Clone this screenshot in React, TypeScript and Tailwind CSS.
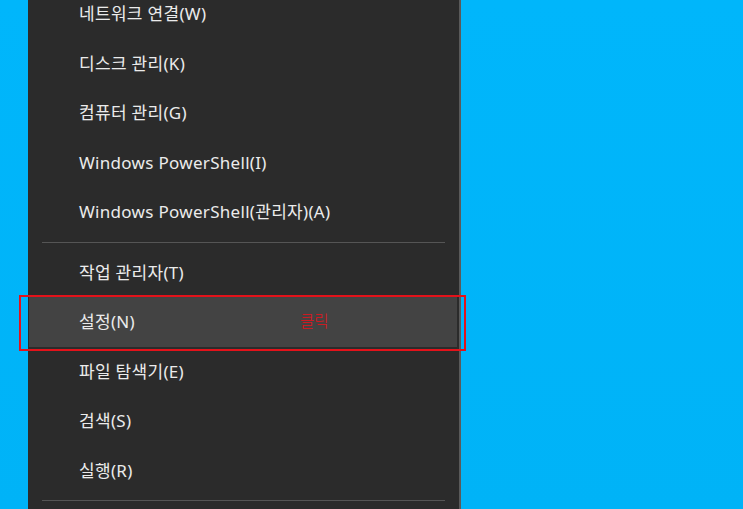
const items: { label: string; key: string }[][] = [
  [
    { label: "네트워크 연결", key: "W" },
    { label: "디스크 관리", key: "K" },
    { label: "컴퓨터 관리", key: "G" },
    { label: "Windows PowerShell", key: "I" },
    { label: "Windows PowerShell(관리자)", key: "A" },
  ],
  [
    { label: "작업 관리자", key: "T" },
    { label: "설정", key: "N" },
    { label: "파일 탐색기", key: "E" },
    { label: "검색", key: "S" },
    { label: "실행", key: "R" },
  ],
];

const MenuRow = ({ label, hotkey, active }: { label: string; hotkey: string; active?: boolean }) => (
  <div
    className={`relative h-[49.5px] mr-[2px] pl-[50px] flex items-center text-[17px] tracking-[0.3px] text-[#ebebeb] ${
      active ? "bg-[#434343]" : ""
    }`}
  >
    {label}({hotkey})
    {active && (
      <>
        <span className="absolute left-[-10px] right-[-9px] top-[-2px] bottom-[-4px] border-2 border-[#e3121a]" />
        <span className="absolute left-[271px] top-[13px] text-[15.5px] tracking-normal font-light text-[#e3121a]">
          클릭
        </span>
      </>
    )}
  </div>
);

const Separator = () => (
  <div className="h-[11px] flex items-center">
    <div className="ml-[13px] w-[403px] h-px bg-[#555555]" />
  </div>
);

export default function App() {
  return (
    <div
      className="w-[743px] h-[509px] overflow-hidden flex bg-gradient-to-b from-[#00b6fb] to-[#00b3f7]"
      style={{ fontFamily: '"Noto Sans", "Noto Sans CJK KR", sans-serif' }}
    >
      <div className="w-[28px] shrink-0" />
      <div className="w-[433px] shrink-0 bg-[#2b2b2b] border-l border-[#2b2b2b] border-r-2 border-r-[#5a5a5a]">
        <div className="mt-[-10.75px]">
          {items[0].map((it) => (
            <MenuRow key={it.key} label={it.label} hotkey={it.key} />
          ))}
          <Separator />
          {items[1].map((it) => (
            <MenuRow key={it.key} label={it.label} hotkey={it.key} active={it.key === "N"} />
          ))}
          <Separator />
        </div>
      </div>
    </div>
  );
}
